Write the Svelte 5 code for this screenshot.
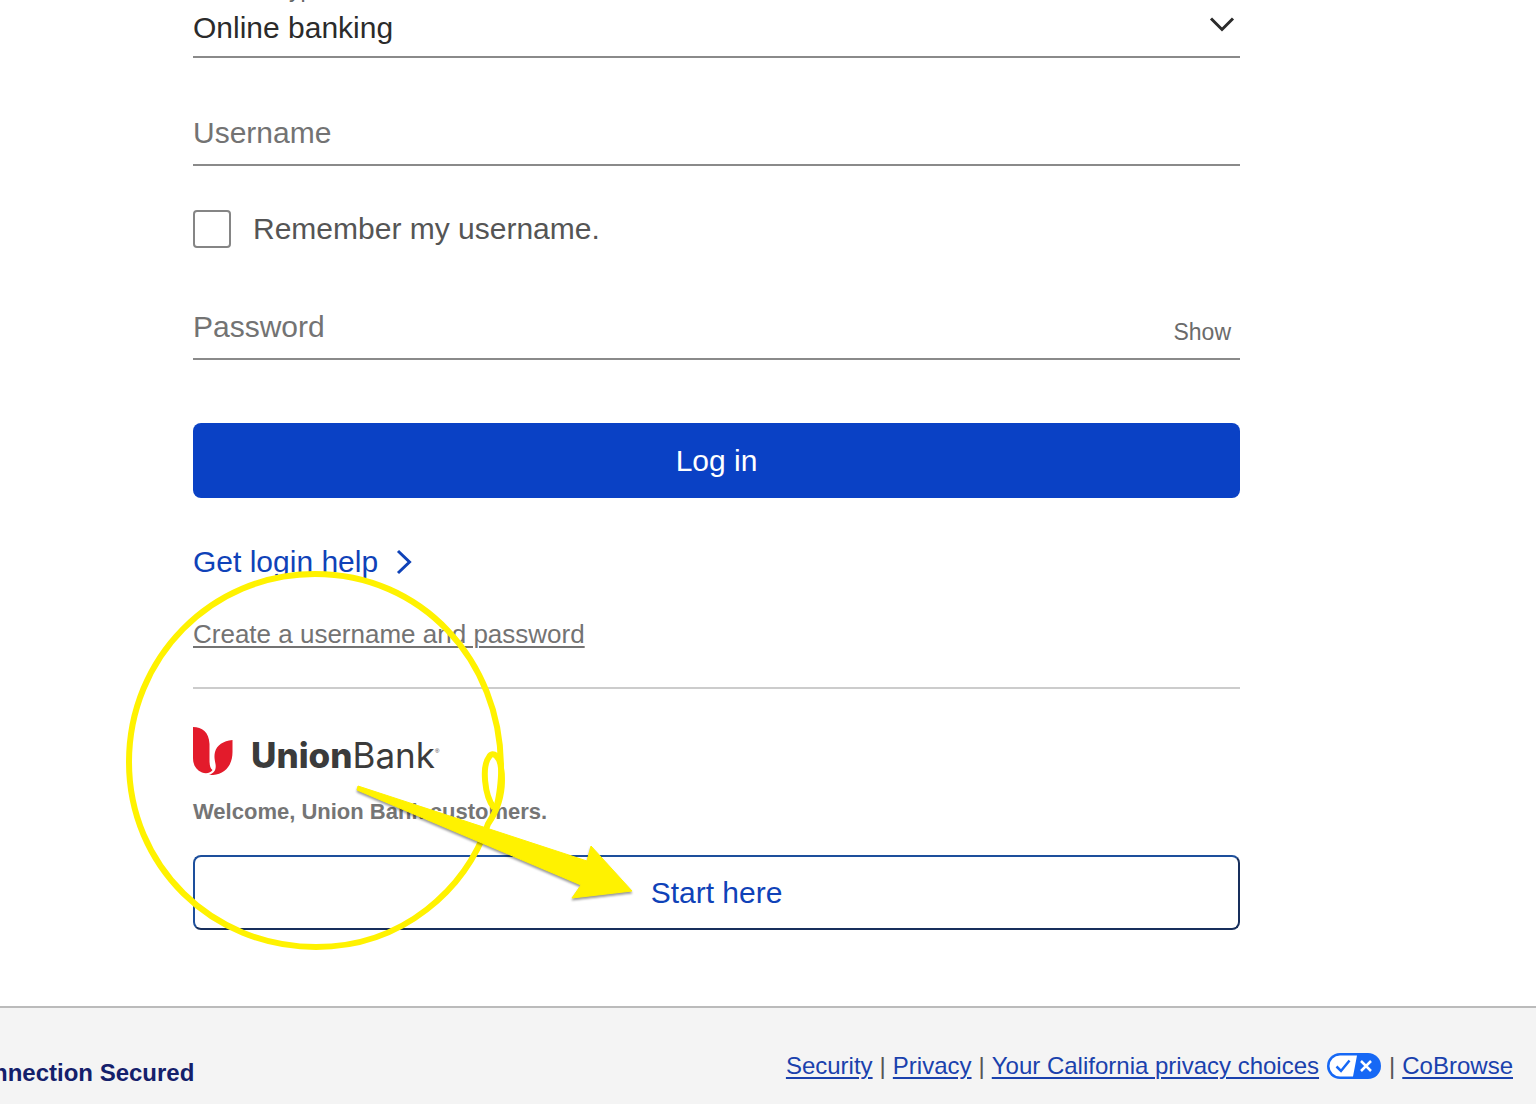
<script lang="ts">
  let accountType: string = 'online';
  let username: string = '';
  let password: string = '';
  let remember: boolean = false;
  let showPassword: boolean = false;
</script>

<div class="page">
  <main>
    <form on:submit|preventDefault>
      <label class="type-label" for="type">Account type</label>
      <div class="field select-field">
        <select id="type" bind:value={accountType}>
          <option value="online">Online banking</option>
        </select>
        <svg class="chevron" width="26" height="18" viewBox="0 0 26 18" aria-hidden="true">
          <path d="M2 2.500 L13 13.500 L24 2.500" />
        </svg>
      </div>

      <div class="field">
        <input type="text" aria-label="Username" placeholder="Username" bind:value={username} />
      </div>

      <div class="remember">
        <input id="remember" type="checkbox" bind:checked={remember} />
        <label for="remember">Remember my username.</label>
      </div>

      <div class="field password">
        <input
          type={showPassword ? 'text' : 'password'}
          aria-label="Password"
          placeholder="Password"
          value={password}
          on:input={(e) => (password = e.currentTarget.value)}
        />
        <button type="button" class="show" on:click={() => (showPassword = !showPassword)}>
          {showPassword ? 'Hide' : 'Show'}
        </button>
      </div>

      <button type="submit" class="login">Log in</button>
    </form>

    <a class="help" href="#help">
      Get login help
      <svg width="16" height="26" viewBox="0 0 16 26" aria-hidden="true">
        <path d="M2 2 L13.5 13 L2 24" />
      </svg>
    </a>
    <a class="create" href="#create">Create a username and password</a>

    <section>
      <div class="logo">
        <svg width="40" height="48" viewBox="0 0 40 48" aria-hidden="true">
          <path d="M0 0 C9 0 16 5 16.500 17 V32 C16.500 38 17 41 19.500 43 C18 46 13 47 9 45.500 C3 43 0 38 0 31 Z" />
          <path d="M39.500 13 V25 C39.500 39 31 49 16 48 C21 46 23.500 43 22.500 37 C21.500 32 21 29 22 25 C24 18 30 14 39.500 13 Z" />
        </svg>
        <span class="wordmark"><b>Union</b>Bank</span><sup>®</sup>
      </div>
      <p>Welcome, Union Bank customers.</p>
      <button type="button" class="start">Start here</button>
    </section>
  </main>

  <footer>
    <strong>Connection Secured</strong>
    <nav>
      <a href="#security">Security</a>
      <span>|</span>
      <a href="#privacy">Privacy</a>
      <span>|</span>
      <a href="#california">Your California privacy choices</a>
      <svg width="56" height="28" viewBox="0 0 56 28" aria-hidden="true">
        <rect x="1" y="1" width="54" height="26" rx="13" fill="#1668f5" />
        <path d="M14 3.500 H31 L27 24.500 H14 A10.500 10.500 0 0 1 14 3.500 Z" fill="#fff" />
        <path d="M10.500 14.500 L15 19 L23.500 8.500" fill="none" stroke="#1668f5" stroke-width="2.500" />
        <path d="M35 9 L45 19 M45 9 L35 19" stroke="#fff" stroke-width="2.500" />
      </svg>
      <span>|</span>
      <a href="#cobrowse">CoBrowse</a>
    </nav>
  </footer>

  <svg class="marks" width="540" height="400" viewBox="110 560 540 400" aria-hidden="true">
    <path
      class="stroke"
      d="M501 768 C501 660 421 574 315 574 C211 574 129 658 129 762 C129 866 212 947 316 947 C404 947 466 888 488 824 C499 808 504 788 501 768 C500 757 493 750 489 757 C482 766 484 795 494 808"
    />
    <path class="swell" d="M498 745 C505 762 507 784 501 798 L488 826 C494 806 500 790 498 745 Z" />
    <path class="arrow" d="M358 786 L587 861 L591 846 L632 891 L572 898 L581 885 L357 790 Z" />
  </svg>
</div>

<style>
  :global(body) {
    margin: 0;
    background: #fff;
    font-family: "Liberation Sans", Arial, sans-serif;
  }

  .page {
    position: relative;
    min-height: 100vh;
    display: flex;
    flex-direction: column;
    overflow: hidden;
  }

  main {
    margin: -24px 296px 76px 193px;
    display: flex;
    flex-direction: column;
    align-items: stretch;
  }

  form {
    display: flex;
    flex-direction: column;
  }

  input, select, button {
    font-family: inherit;
    font-size: 30px;
    box-sizing: border-box;
    margin: 0;
  }

  button {
    cursor: pointer;
  }

  .type-label {
    font-size: 23px;
    line-height: 26px;
    color: #666;
  }

  .field {
    display: flex;
    align-items: center;
    height: 62px;
    margin-top: 44px;
    border-bottom: 2px solid #8a8a8a;
  }

  .field input, .field select {
    flex: 1;
    min-width: 0;
    height: 100%;
    padding: 0;
    border: 0;
    border-radius: 0;
    outline: 0;
    background: transparent;
    color: #2b2b2b;
    appearance: none;
  }

  .field select {
    padding-bottom: 3px;
  }

  .field input::placeholder {
    color: #737373;
    opacity: 1;
  }

  .select-field {
    position: relative;
    height: 54px;
    margin-top: 0;
  }

  .chevron {
    position: absolute;
    right: 5px;
    top: 14px;
    pointer-events: none;
  }

  .chevron path {
    fill: none;
    stroke: #2b2b2b;
    stroke-width: 3;
  }

  .remember {
    display: flex;
    align-items: center;
    gap: 22px;
    height: 38px;
    margin-top: 44px;
    color: #555;
    font-size: 30px;
  }

  .remember input {
    width: 38px;
    height: 38px;
    border: 2px solid #858585;
    border-radius: 4px;
    background: #fff;
    appearance: none;
  }

  .remember input:checked {
    background: #0a41c5;
  }

  .password {
    margin-top: 48px;
  }

  .show {
    padding: 10px 9px 0;
    border: 0;
    background: none;
    color: #6b6b6b;
    font-size: 23px;
  }

  .login {
    height: 75px;
    margin-top: 63px;
    border: 0;
    border-radius: 8px;
    background: #0a41c5;
    color: #fff;
  }

  .help {
    align-self: flex-start;
    display: flex;
    align-items: center;
    gap: 18px;
    margin-top: 46px;
    font-size: 30px;
    line-height: 36px;
    color: #0f42b8;
    text-decoration: none;
  }

  .help path {
    fill: none;
    stroke: #0f42b8;
    stroke-width: 3;
  }

  .create {
    align-self: flex-start;
    margin-top: 38px;
    font-size: 26px;
    line-height: 32px;
    color: #737373;
  }

  section {
    display: flex;
    flex-direction: column;
    margin-top: 37px;
    padding-top: 38px;
    border-top: 2px solid #ccc;
  }

  .logo {
    display: flex;
    align-items: center;
    height: 48px;
    color: #3b3b3b;
  }

  .logo path {
    fill: #e31b2b;
  }

  .wordmark {
    margin-left: 18px;
    padding-top: 8px;
    font-family: Inter, sans-serif;
    font-size: 35px;
    line-height: 40px;
  }

  .wordmark b {
    font-weight: 800;
  }

  sup {
    font-size: 6px;
  }

  p {
    margin: 23px 0 29px;
    font-size: 22px;
    font-weight: bold;
    line-height: 28px;
    color: #757575;
  }

  .start {
    height: 75px;
    border: 2px solid #1d4f9c;
    border-bottom-color: #182f5c;
    border-right-color: #182f5c;
    border-radius: 8px;
    background: #fff;
    color: #0f42b8;
  }

  footer {
    flex: 1;
    display: flex;
    justify-content: space-between;
    align-items: flex-start;
    padding: 44px 23px 16px 0;
    border-top: 2px solid #bbb;
    background: #f4f4f4;
    font-size: 24px;
    line-height: 28px;
    white-space: nowrap;
  }

  strong {
    margin: 7px 0 0 -39px;
    color: #14206b;
  }

  nav {
    display: flex;
    align-items: center;
    gap: 7px;
    color: #555;
  }

  nav a {
    color: #1a41ad;
  }

  .create, nav a {
    text-decoration-thickness: 2px;
    text-underline-offset: 3px;
  }

  .marks {
    position: absolute;
    left: 110px;
    top: 560px;
    pointer-events: none;
  }

  .stroke {
    fill: none;
    stroke: #fff200;
    stroke-width: 6;
    stroke-linejoin: round;
  }

  .swell {
    fill: #fff200;
  }

  .arrow {
    fill: #fff200;
    stroke: #fff200;
    stroke-width: 1;
    stroke-linejoin: round;
    filter: drop-shadow(0 2px 1px rgba(0, 0, 0, 0.4));
  }
</style>
